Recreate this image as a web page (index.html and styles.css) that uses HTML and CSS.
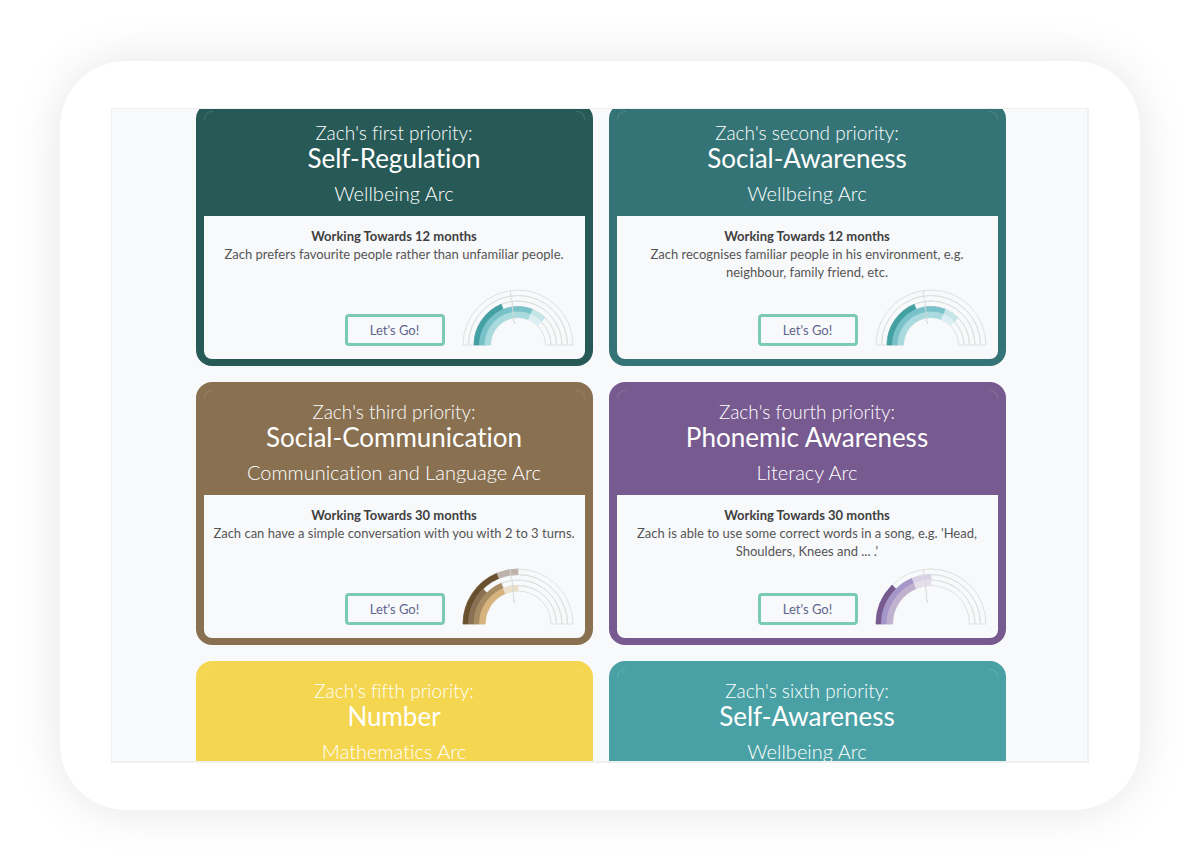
FILE: index.html
```html
<!DOCTYPE html>
<html lang="en">
<head>
  <meta charset="UTF-8">
  <meta name="viewport" content="width=device-width, initial-scale=1.0">
  <title>Zach's priorities</title>
  <link rel="stylesheet" href="styles.css">
</head>
<body>

  <div class="tablet">
    <main class="screen">
      <div class="cards">

        <section class="card card-green">
          <header class="card-header">
            <p class="priority">Zach's first priority:</p>
            <h2>Self-Regulation</h2>
            <p class="arc">Wellbeing Arc</p>
          </header>
          <div class="card-body">
            <h3>Working Towards 12 months</h3>
            <p class="statement">Zach prefers favourite people rather than unfamiliar people.</p>
            <div class="actions">
              <button type="button" class="go">Let's Go!</button>
              <svg class="gauge" viewBox="-56 -56 112 57" data-gauge="wellbeing"></svg>
            </div>
          </div>
        </section>

        <section class="card card-teal">
          <header class="card-header">
            <p class="priority">Zach's second priority:</p>
            <h2>Social-Awareness</h2>
            <p class="arc">Wellbeing Arc</p>
          </header>
          <div class="card-body">
            <h3>Working Towards 12 months</h3>
            <p class="statement">Zach recognises familiar people in his environment, e.g. neighbour, family friend, etc.</p>
            <div class="actions">
              <button type="button" class="go">Let's Go!</button>
              <svg class="gauge" viewBox="-56 -56 112 57" data-gauge="wellbeing"></svg>
            </div>
          </div>
        </section>

        <section class="card card-brown">
          <header class="card-header">
            <p class="priority">Zach's third priority:</p>
            <h2>Social-Communication</h2>
            <p class="arc">Communication and Language Arc</p>
          </header>
          <div class="card-body">
            <h3>Working Towards 30 months</h3>
            <p class="statement">Zach can have a simple conversation with you with 2 to 3 turns.</p>
            <div class="actions">
              <button type="button" class="go">Let's Go!</button>
              <svg class="gauge" viewBox="-56 -56 112 57" data-gauge="communication"></svg>
            </div>
          </div>
        </section>

        <section class="card card-purple">
          <header class="card-header">
            <p class="priority">Zach's fourth priority:</p>
            <h2>Phonemic Awareness</h2>
            <p class="arc">Literacy Arc</p>
          </header>
          <div class="card-body">
            <h3>Working Towards 30 months</h3>
            <p class="statement">Zach is able to use some correct words in a song, e.g. 'Head, Shoulders, Knees and ... .'</p>
            <div class="actions">
              <button type="button" class="go">Let's Go!</button>
              <svg class="gauge" viewBox="-56 -56 112 57" data-gauge="literacy"></svg>
            </div>
          </div>
        </section>

        <section class="card card-yellow">
          <header class="card-header">
            <p class="priority">Zach's fifth priority:</p>
            <h2>Number</h2>
            <p class="arc">Mathematics Arc</p>
          </header>
        </section>

        <section class="card card-aqua">
          <header class="card-header">
            <p class="priority">Zach's sixth priority:</p>
            <h2>Self-Awareness</h2>
            <p class="arc">Wellbeing Arc</p>
          </header>
        </section>

      </div>
    </main>
  </div>

  <script src="gauges.js"></script>
</body>
</html>
```
FILE: styles.css
```css
* {
  box-sizing: border-box;
}

body {
  margin: 0;
  height: 100vh;
  padding: 61px 60px 55px;
  display: flex;
  background: #fff;
  font-family: Lato, "Open Sans", sans-serif;
  font-variant-ligatures: none;
  color: #555;
}

h2, h3, p {
  margin: 0;
}

.tablet {
  flex: 1;
  display: flex;
  padding: 47px 51px;
  border-radius: 66px;
  background: #fff;
  box-shadow: 0 0 50px rgba(0, 0, 0, 0.1);
}

.screen {
  flex: 1;
  overflow: hidden;
  padding-left: 2px;
  background: #f8f9fb;
  border: 1px solid #eff1f1;
  border-width: 1px 2px 2px 1px;
}

.cards {
  display: grid;
  grid-template-columns: 1fr 1fr;
  gap: 16px;
  max-width: 810px;
  margin: -6px auto 0;
}

.card {
  border: 8px solid var(--arc);
  border-bottom-width: 7px;
  border-radius: 16px;
  background: var(--arc);
}

.card-green { --arc: #275956; }
.card-teal { --arc: #347476; }
.card-brown { --arc: #887051; }
.card-purple { --arc: #775a90; }
.card-yellow { --arc: #f5d650; }
.card-aqua { --arc: #49a1a5; }

.card-header {
  position: relative;
  padding: 10px 0 11px;
  text-align: center;
  color: #fff;
}

/* faint highlight in the two top corners */
.card-header::before,
.card-header::after {
  content: "";
  position: absolute;
  top: 0;
  width: 8px;
  height: 8px;
  border-top: 1px solid rgba(255, 255, 255, 0.12);
}

.card-header::before {
  left: 0;
  border-left: 1px solid rgba(255, 255, 255, 0.12);
  border-top-left-radius: 8px;
}

.card-header::after {
  right: 0;
  border-right: 1px solid rgba(255, 255, 255, 0.12);
  border-top-right-radius: 8px;
}

.priority,
.arc {
  font-weight: 300;
  line-height: 24px;
}

.priority {
  font-size: 19px;
}

.arc {
  font-size: 20px;
}

.card h2 {
  margin-bottom: 10px;
  font-size: 26px;
  font-weight: 400;
  line-height: 26px;
}

.card-body {
  padding: 11px 11px 13px;
  border-radius: 0 0 8px 8px;
  background: #f8f9fb;
  text-align: center;
}

.card h3 {
  font-size: 13px;
  font-weight: 700;
  line-height: 18px;
  color: #404040;
}

.statement {
  min-height: 36px;
  margin: 0 -6px 8px;
  font-size: 13px;
  line-height: 18px;
}

.actions {
  display: flex;
  justify-content: flex-end;
  align-items: flex-end;
  gap: 17px;
}

.go {
  width: 100px;
  height: 32px;
  padding: 0;
  border: 3px solid #7bcab3;
  border-radius: 4px;
  background: transparent;
  font-family: inherit;
  font-size: 13px;
  color: #62648f;
}

.gauge {
  display: block;
  width: 112px;
  height: 57px;
}
```
FILE: gauges.js
```js
// bands run from the outside in, each part is [end angle, colour]
const gauges = {
  wellbeing: [
    [],
    [],
    [[67.5, '#43a0a3']],
    [[112.5, '#79c2c9'], [135, '#c6e5e8']],
    [[112.5, '#a9dbde'], [135, '#dceff2']]
  ],
  communication: [
    [[67.5, '#68502f'], [90, '#bdb3aa']],
    [[45, '#8a7153']],
    [[67.5, '#a78c63']],
    [[67.5, '#d6b37c'], [90, '#eadfca']]
  ],
  literacy: [
    [[45, '#775a90']],
    [[67.5, '#a496c8'], [90, '#d8d2e6']],
    [[67.5, '#c0b1cf'], [90, '#e5dfeb']]
  ]
};

const OUTER = 55;
const BAND = 5.5;

function point(radius, angle) {
  const rad = angle * Math.PI / 180;
  return `${-radius * Math.cos(rad)} ${-radius * Math.sin(rad)}`;
}

function segment(outer, from, to) {
  const inner = outer - BAND;
  return `M${point(outer, from)} A${outer} ${outer} 0 0 1 ${point(outer, to)} ` +
    `L${point(inner, to)} A${inner} ${inner} 0 0 0 ${point(inner, from)} Z`;
}

document.querySelectorAll('[data-gauge]').forEach(svg => {
  const bands = gauges[svg.dataset.gauge];
  let html = '';

  bands.forEach((parts, i) => {
    const outer = OUTER - i * BAND;
    html += `<path d="${segment(outer, 0, 180)}" fill="none" stroke="#dfe1e1"/>`;
  });

  bands.forEach((parts, i) => {
    let from = 0;
    parts.forEach(([to, colour]) => {
      html += `<path d="${segment(OUTER - i * BAND, from, to)}" fill="${colour}" stroke="${colour}" stroke-width="0.7"/>`;
      from = to;
    });
  });

  // age marker
  html += '<path d="M-8 -54 l1 3 -1 2 2 4 1 13 1 6 -1 2 2 1 -1 2" fill="none" stroke="#d6dada"/>';

  svg.innerHTML = html;
});
```
